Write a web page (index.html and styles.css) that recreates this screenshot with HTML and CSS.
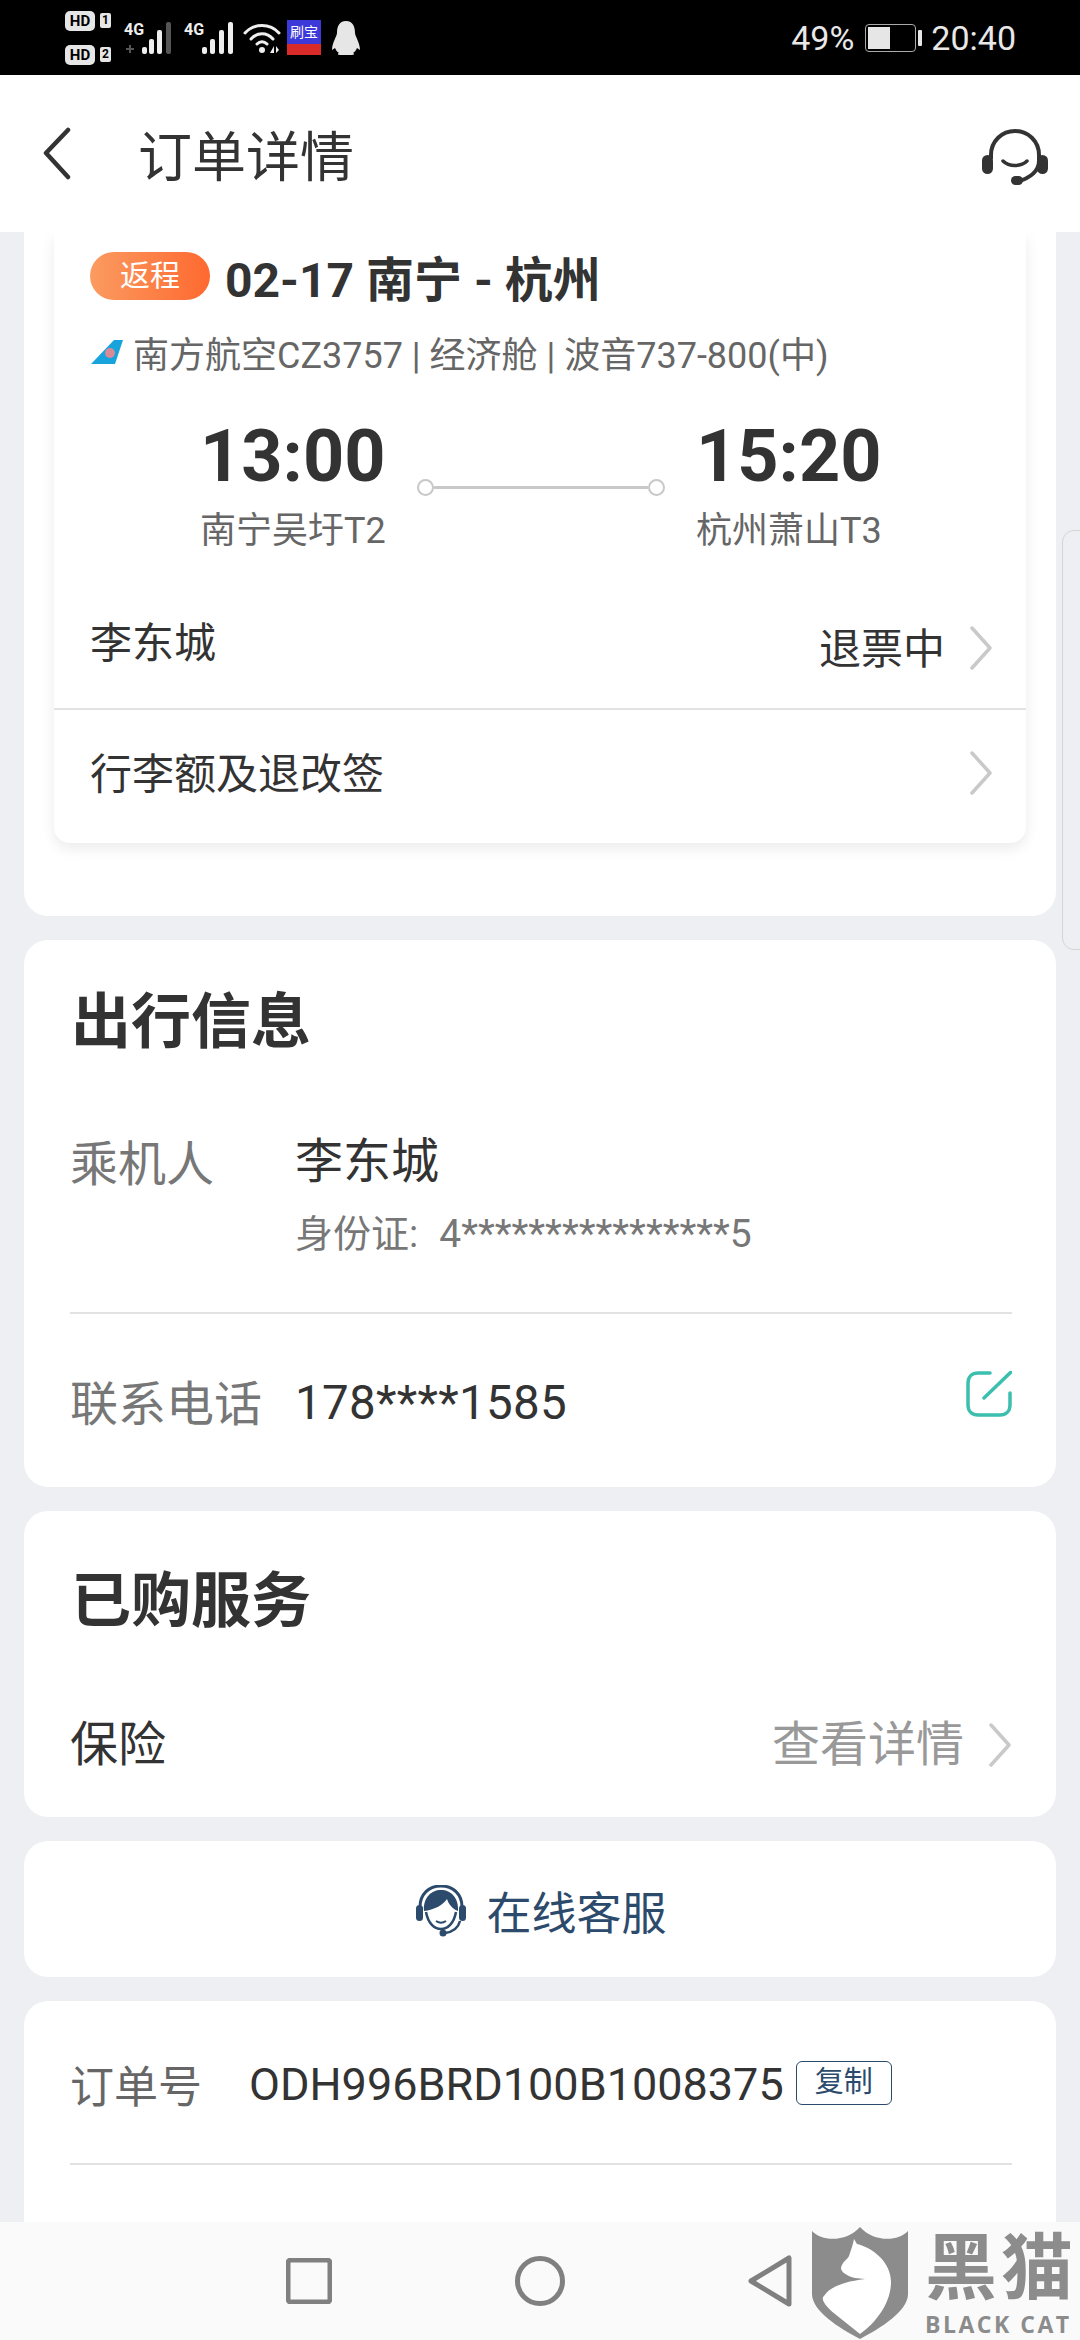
FILE: index.html
```html
<!DOCTYPE html>
<html lang="zh-CN">

<head>
    <meta charset="UTF-8">
    <title>订单详情</title>
    <link rel="stylesheet" href="styles.css">
</head>

<body>
    <div class="screen">
        <!-- Status bar -->
        <div class="status-bar">
            <div class="status-left">
                <div class="hd-stack">
                    <div class="hd-line"><span class="hd">HD</span><span class="sim">1</span></div>
                    <div class="hd-line"><span class="hd">HD</span><span class="sim">2</span></div>
                </div>
                <svg class="signal" viewBox="0 0 54 36">
                    <text x="0" y="15" class="net-text">4G</text>
                    <path d="M2 29h8M6 25v8" stroke="#555" stroke-width="2" />
                    <rect x="18" y="27" width="5" height="7" rx="2" fill="#eee" />
                    <rect x="25" y="19" width="5" height="15" rx="2" fill="#eee" />
                    <rect x="33" y="10" width="5" height="24" rx="2" fill="#eee" />
                    <rect x="42" y="2" width="5" height="32" rx="2" fill="#555" />
                </svg>
                <svg class="signal signal-b" viewBox="0 0 54 36">
                    <text x="0" y="15" class="net-text">4G</text>
                    <rect x="18" y="27" width="5" height="7" rx="2" fill="#eee" />
                    <rect x="26" y="19" width="5" height="15" rx="2" fill="#eee" />
                    <rect x="35" y="10" width="5" height="24" rx="2" fill="#eee" />
                    <rect x="44" y="2" width="5" height="32" rx="2" fill="#eee" />
                </svg>
                <svg class="wifi" viewBox="0 0 38 32">
                    <path d="M2 11C11 1 27 1 36 11M8 17C14 10 24 10 30 17M14 22C17 19 21 19 24 22" fill="none" stroke="#eee" stroke-width="3" stroke-linecap="round" />
                    <circle cx="19" cy="28" r="3" fill="#eee" />
                    <path d="M27 31l4-7v7zM33 24v7l3-3z" fill="#eee" />
                </svg>
                <div class="app-badge">
                    <span class="app-top">刷宝</span>
                    <span class="app-bottom"></span>
                </div>
                <svg class="qq" viewBox="0 0 30 36">
                    <path d="M15 1C8 1 6 7 6 13C6 16 1 23 1 30L4 28C5 30 6 32 8 33C6 34 7 35 10 35H20C23 35 24 34 22 33C24 32 25 30 26 28L29 30C29 23 24 16 24 13C24 7 22 1 15 1Z" fill="#e6e6e6" />
                </svg>
            </div>
            <div class="status-right">
                <span>49%</span>
                <div class="battery"><div class="battery-level"></div></div>
                <div class="battery-tip"></div>
                <span class="clock">20:40</span>
            </div>
        </div>

        <!-- Header -->
        <header class="topbar">
            <svg class="back" viewBox="0 0 30 54">
                <path d="M26 3L4 26L26 50" fill="none" stroke="#333" stroke-width="4.5" stroke-linecap="round" stroke-linejoin="round" />
            </svg>
            <h1 class="page-title">订单详情</h1>
            <svg class="support" viewBox="0 0 68 58">
                <path d="M10 30V26C10 12 21 2 34 2C47 2 58 12 58 26V32C58 42 49 49 38 52" fill="none" stroke="#333" stroke-width="4" />
                <rect x="1" y="26" width="11" height="19" rx="5.5" fill="#333" />
                <rect x="56" y="26" width="11" height="19" rx="5.5" fill="#333" />
                <rect x="30" y="47" width="12" height="9" rx="4.5" fill="#333" />
                <path d="M22 32C28 38 40 38 46 32" fill="none" stroke="#333" stroke-width="3.5" stroke-linecap="round" />
            </svg>
        </header>

        <main class="content">
            <section class="card flight-card">
                <div class="flight-inner">
                    <div class="flight-head">
                        <span class="pill">返程</span>
                        <span class="flight-title">02-17 南宁 - 杭州</span>
                    </div>
                    <div class="flight-sub">
                        <svg class="tail" viewBox="0 0 34 26">
                            <path d="M1 25L24 1H33L25 25Z" fill="#17a3dc" />
                            <circle cx="20" cy="14" r="5" fill="#d98a97" />
                        </svg>
                        <span>南方航空CZ3757 | 经济舱 | 波音737-800(中)</span>
                    </div>
                    <div class="times">
                        <div class="time-col">
                            <div class="time">13:00</div>
                            <div class="airport">南宁吴圩T2</div>
                        </div>
                        <div class="route">
                            <span class="route-dot"></span>
                            <span class="route-line"></span>
                            <span class="route-dot"></span>
                        </div>
                        <div class="time-col">
                            <div class="time">15:20</div>
                            <div class="airport">杭州萧山T3</div>
                        </div>
                    </div>
                    <div class="passenger-row">
                        <span class="passenger-name">李东城</span>
                        <div class="passenger-state">
                            <span>退票中</span>
                            <svg class="chevron" viewBox="0 0 24 44"><path d="M3 2L21 22L3 42" /></svg>
                        </div>
                    </div>
                    <div class="baggage-row">
                        <span>行李额及退改签</span>
                        <svg class="chevron" viewBox="0 0 24 44"><path d="M3 2L21 22L3 42" /></svg>
                    </div>
                </div>
            </section>

            <section class="card trip-card">
                <h2 class="card-title">出行信息</h2>
                <div class="traveller">
                    <span class="field-label">乘机人</span>
                    <div>
                        <div class="field-value">李东城</div>
                        <div class="id-line">身份证:<span class="id-number">4****************5</span></div>
                    </div>
                </div>
                <div class="contact">
                    <span class="field-label">联系电话</span>
                    <span class="phone">178****1585</span>
                    <svg class="edit" viewBox="0 0 46 46">
                        <path d="M24 2H12C6 2 2 6 2 12V34C2 40 6 44 12 44H34C40 44 44 40 44 34V22" fill="none" stroke="#3cbfae" stroke-width="3.5" stroke-linecap="round" />
                        <path d="M18 27L45 1" stroke="#3cbfae" stroke-width="3.5" stroke-linecap="round" />
                    </svg>
                </div>
            </section>

            <section class="card service-card">
                <h2 class="card-title">已购服务</h2>
                <div class="insurance">
                    <span class="field-label field-dark">保险</span>
                    <div class="insurance-link">
                        <span>查看详情</span>
                        <svg class="chevron" viewBox="0 0 24 44"><path d="M3 2L21 22L3 42" /></svg>
                    </div>
                </div>
            </section>

            <section class="card online-card">
                <svg class="agent" viewBox="0 0 50 52">
                    <path d="M4 22C4 9 13 1 25 1C37 1 46 9 46 22" fill="none" stroke="#2c4a6b" stroke-width="3" />
                    <path d="M8 26C7 13 15 5 25 5C35 5 43 13 42 26C37 24 33 20 31 14C27 20 18 25 8 26Z" fill="#2c4a6b" />
                    <path d="M10 27C12 38 18 44 25 44C32 44 38 38 40 27" fill="none" stroke="#2c4a6b" stroke-width="2.5" />
                    <rect x="0" y="20" width="7" height="16" rx="3.5" fill="#2c4a6b" />
                    <rect x="43" y="20" width="7" height="16" rx="3.5" fill="#2c4a6b" />
                    <path d="M44 36C42 44 36 47 29 48" fill="none" stroke="#2c4a6b" stroke-width="2.5" />
                    <circle cx="27" cy="48" r="3.5" fill="#2c4a6b" />
                    <path d="M20 36C23 38 27 38 30 36" fill="none" stroke="#2c4a6b" stroke-width="2" />
                </svg>
                <span>在线客服</span>
            </section>

            <section class="card order-card">
                <div class="order-row">
                    <span class="order-label">订单号</span>
                    <span class="order-no">ODH996BRD100B1008375</span>
                    <span class="copy">复制</span>
                </div>
            </section>
        </main>

        <!-- Android nav bar -->
        <nav class="navbar">
            <svg class="nav-icon nav-square" viewBox="0 0 46 46"><rect x="2" y="2" width="42" height="42" rx="3" /></svg>
            <svg class="nav-icon nav-circle" viewBox="0 0 50 50"><circle cx="25" cy="25" r="22.5" /></svg>
            <svg class="nav-icon nav-back" viewBox="0 0 46 52"><path d="M41 3V49L3 26Z" stroke-linejoin="round" /></svg>
        </nav>

        <!-- floating handle at the right edge -->
        <div class="edge-handle"></div>

        <!-- watermark -->
        <div class="watermark">
            <svg class="wm-shield" viewBox="0 0 98 114">
                <path d="M1 5C11 16 36 16 49 1C62 16 87 16 97 5V68C97 85 70 102 49 113C28 102 1 85 1 68Z" fill="#8c8c8c" />
                <path d="M43 13L46 18C62 22 80 36 80 56C80 76 66 96 49 108L24 88C12 78 10 72 13 70C18 62 30 56 54 53L44 52C36 50 30 46 30 42C31 36 36 34 38 30C40 24 42 18 43 13Z" fill="#fff" />
            </svg>
            <div class="wm-text">
                <div class="wm-cn">黑猫</div>
                <div class="wm-en">BLACK CAT</div>
            </div>
        </div>
    </div>
</body>

</html>
```

FILE: styles.css
```css
:root {
    --page-bg: #eeeff3;
    --text-dark: #333333;
    --text-mid: #666666;
    --text-light: #999999;
    --line: #e2e2e2;
    --navy: #2c4a6b;
}

* {
    box-sizing: border-box;
}

html,
body {
    margin: 0;
    padding: 0;
}

body {
    font-family: Roboto, "Noto Sans CJK SC", sans-serif;
    color: var(--text-dark);
}

.screen {
    position: relative;
    width: 1080px;
    height: 2340px;
    display: flex;
    flex-direction: column;
    overflow: hidden;
    background-color: var(--page-bg);
}

/* status bar */
.status-bar {
    height: 75px;
    flex-shrink: 0;
    background-color: #000;
    color: #e8e8e8;
    display: flex;
    justify-content: space-between;
    align-items: center;
    padding: 0 64px 0 65px;
}

.status-left {
    display: flex;
    align-items: center;
}

.hd-stack {
    display: flex;
    flex-direction: column;
    gap: 14px;
    width: 56px;
}

.hd-line {
    display: flex;
    align-items: center;
    gap: 5px;
    height: 20px;
}

.hd {
    width: 30px;
    height: 20px;
    background-color: #e6e6e6;
    color: #000;
    border-radius: 5px;
    font-size: 15px;
    line-height: 20px;
    font-weight: 700;
    text-align: center;
}

.sim {
    width: 11px;
    height: 15px;
    background-color: #e6e6e6;
    color: #000;
    border-radius: 2px;
    font-size: 12px;
    line-height: 15px;
    font-weight: 700;
    text-align: center;
}

.signal {
    width: 54px;
    height: 36px;
    margin-left: 3px;
}

.signal-b {
    margin-left: 6px;
}

.net-text {
    font-family: "Roboto", sans-serif;
    font-size: 16px;
    font-weight: 700;
    fill: #eee;
}

.wifi {
    width: 38px;
    height: 32px;
    margin-left: 5px;
}

.app-badge {
    width: 34px;
    height: 35px;
    margin-left: 6px;
    display: flex;
    flex-direction: column;
    overflow: hidden;
}

.app-top {
    height: 24px;
    background-color: #3c39d8;
    color: #fff;
    font-size: 14px;
    line-height: 24px;
    text-align: center;
    white-space: nowrap;
}

.app-bottom {
    flex: 1;
    background-color: #d92a2a;
}

.qq {
    width: 30px;
    height: 36px;
    margin-left: 10px;
}

.status-right {
    display: flex;
    align-items: center;
    font-size: 34px;
}

.battery {
    width: 51px;
    height: 28px;
    margin-left: 11px;
    border: 1.5px solid #aaa;
    border-radius: 4px;
    padding: 2px;
}

.battery-level {
    width: 22px;
    height: 100%;
    background-color: #e6e6e6;
}

.battery-tip {
    width: 4px;
    height: 16px;
    margin-left: 2px;
    background-color: #e6e6e6;
    border-radius: 1px;
}

.clock {
    margin-left: 9px;
}

/* header */
.topbar {
    height: 157px;
    flex-shrink: 0;
    background-color: #fff;
    display: flex;
    align-items: center;
    padding: 0 31px 0 42px;
}

.back {
    width: 30px;
    height: 54px;
}

.page-title {
    flex: 1;
    margin: 0 0 0 66px;
    font-size: 54px;
    font-weight: 400;
}

.support {
    width: 68px;
    height: 58px;
    margin-top: 8px;
}

/* cards */
.content {
    flex: 1;
    min-height: 0;
    overflow: hidden;
    padding: 0 24px;
    display: flex;
    flex-direction: column;
    gap: 24px;
}

.card {
    flex-shrink: 0;
    background-color: #fff;
    border-radius: 24px;
}

.flight-card {
    height: 684px;
    padding: 0 30px;
    border-radius: 0 0 24px 24px;
}

.flight-inner {
    height: 611px;
    padding-top: 20px;
    background-color: #fff;
    border-radius: 0 0 16px 16px;
    box-shadow: 0 6px 14px rgba(0, 0, 0, 0.08);
}

.flight-head {
    display: flex;
    align-items: center;
    padding-left: 36px;
    height: 48px;
}

.pill {
    width: 120px;
    height: 48px;
    border-radius: 24px;
    background: linear-gradient(90deg, #fb9b60, #fe6930);
    color: #fff;
    font-size: 30px;
    line-height: 48px;
    text-align: center;
}

.flight-title {
    margin-left: 15px;
    font-size: 48px;
    font-weight: 700;
    white-space: nowrap;
}

.flight-sub {
    display: flex;
    align-items: center;
    height: 50px;
    margin-top: 27px;
    padding-left: 36px;
    font-size: 36px;
    color: var(--text-mid);
    white-space: nowrap;
}

.tail {
    width: 34px;
    height: 26px;
    margin-right: 9px;
}

.times {
    display: flex;
    align-items: flex-start;
    margin-top: 39px;
    padding-left: 146px;
}

.time-col {
    width: 184px;
    text-align: center;
}

.time {
    font-size: 72px;
    line-height: 82px;
    font-weight: 700;
}

.airport {
    margin-top: 9px;
    font-size: 36px;
    line-height: 48px;
    color: var(--text-mid);
    white-space: nowrap;
}

.route {
    width: 248px;
    margin: 63px 31px 0 33px;
    display: flex;
    align-items: center;
}

.route-dot {
    width: 17px;
    height: 17px;
    flex-shrink: 0;
    border: 2.5px solid #c8c8c8;
    border-radius: 50%;
}

.route-line {
    flex: 1;
    height: 3px;
    background-color: #c8c8c8;
}

.passenger-row {
    display: flex;
    justify-content: space-between;
    align-items: center;
    height: 126px;
    margin-top: 29px;
    padding: 0 33px 0 36px;
    font-size: 42px;
    border-bottom: 2px solid var(--line);
}

.passenger-name {
    margin-bottom: 14px;
}

.passenger-state {
    display: flex;
    align-items: center;
    gap: 24px;
    margin-bottom: 2px;
    color: var(--text-dark);
}

.baggage-row {
    display: flex;
    justify-content: space-between;
    align-items: center;
    height: 121px;
    padding: 0 33px 0 36px;
    font-size: 42px;
}

.chevron {
    width: 24px;
    height: 44px;
    flex-shrink: 0;
}

.passenger-state .chevron,
.baggage-row .chevron {
    margin-top: 5px;
}

.chevron path {
    fill: none;
    stroke: #c9c9c9;
    stroke-width: 3.5;
    stroke-linecap: round;
    stroke-linejoin: round;
}

.card-title {
    margin: 0;
    font-size: 60px;
    font-weight: 700;
    line-height: 80px;
}

.trip-card {
    height: 547px;
    padding: 43px 44px 0 46px;
}

.trip-card .card-title,
.service-card .card-title {
    margin-left: 1px;
}

.traveller {
    display: flex;
    height: 182px;
    margin-top: 69px;
    border-bottom: 2px solid var(--line);
}

.field-label {
    width: 225px;
    flex-shrink: 0;
    font-size: 48px;
    line-height: 66px;
    color: #777;
}

.field-dark {
    width: auto;
    color: var(--text-dark);
}

.field-value {
    font-size: 48px;
    line-height: 60px;
}

.id-line {
    margin-top: 17px;
    font-size: 38px;
    line-height: 50px;
    color: #777;
    white-space: nowrap;
}

.id-number {
    margin-left: 21px;
    font-size: 39px;
}

.contact {
    display: flex;
    align-items: center;
    height: 172px;
    padding-top: 6px;
}

.contact .field-label {
    margin-top: 3px;
}

.phone {
    flex: 1;
    font-size: 47.5px;
    letter-spacing: 0.3px;
}

.edit {
    width: 46px;
    height: 46px;
    margin-bottom: 18px;
}

.service-card {
    height: 306px;
    padding: 51px 44px 0 46px;
}

.insurance {
    display: flex;
    justify-content: space-between;
    align-items: center;
    height: 66px;
    margin-top: 70px;
}

.insurance-link {
    display: flex;
    align-items: center;
    gap: 24px;
    font-size: 48px;
    line-height: 66px;
    color: var(--text-light);
}

.online-card {
    height: 136px;
    display: flex;
    justify-content: center;
    align-items: center;
    gap: 20px;
    padding: 3px 0 0 3px;
    font-size: 45px;
    color: var(--navy);
}

.agent {
    width: 50px;
    height: 52px;
}

.order-card {
    height: 400px;
    padding: 50px 44px 0 46px;
}

.order-row {
    display: flex;
    align-items: center;
    height: 114px;
    padding-bottom: 46px;
    border-bottom: 2px solid var(--line);
    white-space: nowrap;
}

.order-label {
    width: 179px;
    flex-shrink: 0;
    font-size: 44px;
    color: var(--text-mid);
}

.order-no {
    font-size: 45px;
}

.copy {
    width: 96px;
    height: 44px;
    margin: 0 0 3px 12px;
    border: 1.5px solid var(--navy);
    border-radius: 6px;
    color: var(--navy);
    font-size: 29px;
    line-height: 40px;
    text-align: center;
}

/* nav bar */
.navbar {
    height: 118px;
    flex-shrink: 0;
    background-color: #fafafa;
    display: flex;
    align-items: center;
    gap: 183px;
    padding-left: 286px;
}

.nav-icon {
    fill: none;
    stroke: #808080;
    stroke-width: 5;
}

.nav-square {
    width: 46px;
    height: 46px;
}

.nav-circle {
    width: 50px;
    height: 50px;
}

.nav-back {
    width: 46px;
    height: 52px;
}

/* overlays */
.edge-handle {
    position: absolute;
    top: 530px;
    left: 1062px;
    width: 30px;
    height: 420px;
    border: 1.5px solid #d5d5d5;
    border-radius: 12px;
}

.watermark {
    position: absolute;
    left: 811px;
    top: 2226px;
    display: flex;
    gap: 16px;
}

.wm-shield {
    width: 98px;
    height: 114px;
}

.wm-text {
    color: #8c8c8c;
    font-weight: 700;
}

.wm-cn {
    font-size: 72px;
    line-height: 68px;
    margin-top: 9px;
    letter-spacing: 4px;
    white-space: nowrap;
}

.wm-en {
    font-family: "Open Sans", sans-serif;
    font-size: 23px;
    line-height: 26px;
    letter-spacing: 2.5px;
    white-space: nowrap;
    margin-top: 8px;
}
```
